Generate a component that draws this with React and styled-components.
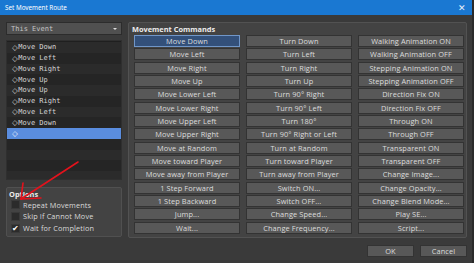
import React from "react";
import styled, { createGlobalStyle } from "styled-components";

const Global = createGlobalStyle`
  html, body { margin: 0; padding: 0; }
  body {
    width: 474px; height: 263px; overflow: hidden;
    background: #383838;
    font-family: "Open Sans", "Noto Sans", sans-serif;
  }
`;

const Window = styled.div`
  position: relative;
  width: 474px;
  height: 263px;
  background: #3a3a3a;
  display: flex;
  flex-direction: column;
  box-sizing: border-box;
  border-right: 2px solid #2a2a2a;
`;

const TitleBar = styled.div`
  height: 15px;
  background: #1a78d2;
  color: #fff;
  font-family: "Noto Sans", sans-serif;
  font-size: 6.3px;
  display: flex;
  align-items: center;
  justify-content: space-between;
  padding: 0 6px 0 5px;
  box-sizing: border-box;
`;

const Close = styled.span`
  font-size: 9px;
  line-height: 1;
  color: #e8f0fa;
`;

const Body = styled.div`
  display: grid;
  grid-template-columns: 116px 339px;
  column-gap: 6px;
  padding: 7px 0 0 6px;
`;

const LeftCol = styled.div`
  display: flex;
  flex-direction: column;
`;

const Dropdown = styled.div`
  height: 13px;
  box-sizing: border-box;
  background: #505050;
  border: 1px solid #2c2c2c;
  display: flex;
  align-items: center;
  justify-content: space-between;
  padding: 0 4px 0 4px;
  font-family: "DejaVu Sans Mono", monospace;
  font-size: 7px;
  color: #c4c4c4;
`;

const Caret = styled.span`
  width: 0; height: 0;
  border-left: 2px solid transparent;
  border-right: 2px solid transparent;
  border-top: 2px solid #dcdcdc;
`;

const List = styled.div`
  margin-top: 5px;
  height: 140px;
  box-sizing: border-box;
  background: #1f1f1f;
  border: 1px solid #2f2f2f;
  padding-top: 1px;
  overflow: hidden;
`;

const Row = styled.div`
  height: 10.75px;
  display: flex;
  align-items: center;
  padding-left: 5px;
  font-family: "DejaVu Sans Mono", monospace;
  font-size: 7px;
  color: ${p => (p.$sel ? "#eef3fd" : "#d4d4d4")};
  background: ${p => (p.$sel ? "#5a8ddf" : p.$odd ? "#252525" : "#2b2b2b")};
  white-space: pre;
`;

const Diamond = styled.span`
  font-family: "DejaVu Sans", sans-serif;
  font-size: 7.5px;
  margin-right: 0.5px;
`;

const Options = styled.div`
  margin-top: 7px;
  height: 50px;
  box-sizing: border-box;
  background: #434343;
  border: 1px solid #505050;
  border-radius: 2px;
  padding: 1px 0 0 2px;
  display: flex;
  flex-direction: column;
`;

const GroupLabel = styled.div`
  font-weight: 700;
  font-size: 7.4px;
  color: #ececec;
  height: 10px;
  line-height: 10px;
`;

const CheckRow = styled.div`
  height: 11.67px;
  display: flex;
  align-items: center;
  gap: 3px;
  padding-left: 2px;
  font-size: 7.3px;
  color: #dadada;
  letter-spacing: 0.15px;
`;

const Box = styled.span`
  width: 9px;
  height: 9px;
  box-sizing: border-box;
  background: #2b2b2b;
  border: 1px solid #393939;
  display: flex;
  align-items: center;
  justify-content: center;
  color: #fff;
  font-size: 8px;
  line-height: 1;
`;

const Group = styled.div`
  height: 216px;
  box-sizing: border-box;
  background: #434343;
  border: 1px solid #525252;
  border-radius: 2px;
  padding: 0 2px 0 5px;
`;

const GroupTitle = styled(GroupLabel)`
  height: 12px;
  line-height: 12px;
  margin-left: -2px;
`;

const Grid = styled.div`
  display: grid;
  grid-template-columns: repeat(3, 106px);
  column-gap: 6px;
  row-gap: 1.33px;
  grid-auto-flow: column;
  grid-template-rows: repeat(15, 12px);
`;

const Btn = styled.div`
  box-sizing: border-box;
  background: ${p => (p.$sel ? "#33507a" : "#585858")};
  border: 1px solid ${p => (p.$sel ? "#7096c8" : "#333")};
  color: #dcdcdc;
  font-size: 7.4px;
  display: flex;
  align-items: center;
  justify-content: center;
  white-space: nowrap;
  letter-spacing: 0.1px;
`;

const Footer = styled.div`
  display: flex;
  justify-content: flex-end;
  gap: 6px;
  padding: 7px 5px 0 0;
`;

const FootBtn = styled(Btn)`
  width: 47px;
  height: 12px;
`;

const Arrow = styled.svg`
  position: absolute;
  left: 0;
  top: 0;
  pointer-events: none;
`;

const listItems = [
  "Move Down", "Move Left", "Move Right", "Move Up", "Move Up",
  "Move Right", "Move Left", "Move Down",
];

const cols = [
  ["Move Down", "Move Left", "Move Right", "Move Up", "Move Lower Left", "Move Lower Right",
    "Move Upper Left", "Move Upper Right", "Move at Random", "Move toward Player",
    "Move away from Player", "1 Step Forward", "1 Step Backward", "Jump...", "Wait..."],
  ["Turn Down", "Turn Left", "Turn Right", "Turn Up", "Turn 90° Right", "Turn 90° Left",
    "Turn 180°", "Turn 90° Right or Left", "Turn at Random", "Turn toward Player",
    "Turn away from Player", "Switch ON...", "Switch OFF...", "Change Speed...", "Change Frequency..."],
  ["Walking Animation ON", "Walking Animation OFF", "Stepping Animation ON", "Stepping Animation OFF",
    "Direction Fix ON", "Direction Fix OFF", "Through ON", "Through OFF", "Transparent ON",
    "Transparent OFF", "Change Image...", "Change Opacity...", "Change Blend Mode...", "Play SE...", "Script..."],
];

export default function App() {
  const rows = [...listItems, ""];
  const all = [...rows];
  while (all.length < 13) all.push(null);
  return (
    <Window>
      <Global />
      <TitleBar>
        <span>Set Movement Route</span>
        <Close>✕</Close>
      </TitleBar>
      <Body>
        <LeftCol>
          <Dropdown>
            <span>This Event</span>
            <Caret />
          </Dropdown>
          <List>
            {all.map((r, i) => (
              <Row key={i} $odd={i % 2 === 1} $sel={i === 8}>
                {r !== null && <><Diamond>◇</Diamond>{r}</>}
              </Row>
            ))}
          </List>
          <Options>
            <GroupLabel>Options</GroupLabel>
            <CheckRow><Box />Repeat Movements</CheckRow>
            <CheckRow><Box />Skip If Cannot Move</CheckRow>
            <CheckRow><Box>✔</Box>Wait for Completion</CheckRow>
          </Options>
        </LeftCol>
        <Group>
          <GroupTitle>Movement Commands</GroupTitle>
          <Grid>
            {cols.flat().map((t, i) => (
              <Btn key={i} $sel={i === 0}>{t}</Btn>
            ))}
          </Grid>
        </Group>
      </Body>
      <Footer>
        <FootBtn>OK</FootBtn>
        <FootBtn>Cancel</FootBtn>
      </Footer>
      <Arrow width="474" height="263" viewBox="0 0 474 263">
        <g stroke="#e3121c" strokeWidth="1.6" fill="none" strokeLinecap="round">
          <line x1="78" y1="162" x2="21" y2="199" />
          <line x1="21" y1="199" x2="23" y2="183" />
          <line x1="21" y1="199" x2="41" y2="198" />
        </g>
      </Arrow>
    </Window>
  );
}
